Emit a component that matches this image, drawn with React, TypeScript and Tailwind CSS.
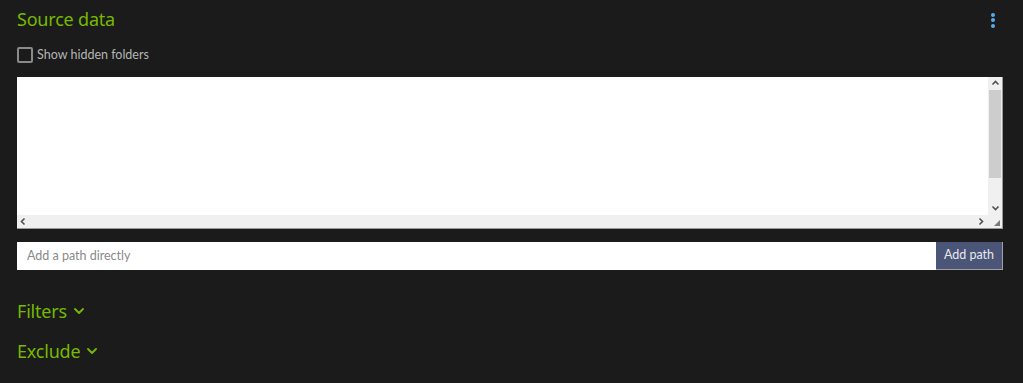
import React from "react";

const Chevron = ({ className = "" }: { className?: string }) => (
  <svg viewBox="0 0 10 6" className={className} fill="none" stroke="currentColor" strokeWidth="1.8" strokeLinecap="round" strokeLinejoin="round">
    <path d="M1 1 L5 5 L9 1" />
  </svg>
);

const Arrow = ({ dir }: { dir: "up" | "down" | "left" | "right" }) => {
  const d = {
    up: "M1.5 5.5 L4.5 2.5 L7.5 5.5",
    down: "M1.5 2.5 L4.5 5.5 L7.5 2.5",
    left: "M5.5 1.5 L2.5 4.5 L5.5 7.5",
    right: "M2.5 1.5 L5.5 4.5 L2.5 7.5",
  }[dir];
  return (
    <svg viewBox="0 0 9 9" className="w-[9px] h-[9px]" fill="none" stroke="#505050" strokeWidth="1.6">
      <path d={d} />
    </svg>
  );
};

export default function App() {
  return (
    <div
      className="w-[1023px] h-[383px] bg-[#1b1b1b] px-[17px] pt-[7px] overflow-hidden"
      style={{ fontFamily: '"Noto Sans", "Open Sans", sans-serif' }}
    >
      <div className="flex items-center justify-between h-[24px]">
        <h1 className="text-[18px] text-[#76b900] leading-none tracking-[-0.2px]">Source data</h1>
        <div className="flex flex-col gap-[1.5px] mr-[11px] pt-[2px]">
          <span className="w-[4px] h-[4px] rounded-full bg-[#5aaae8]" />
          <span className="w-[4px] h-[4px] rounded-full bg-[#5aaae8]" />
          <span className="w-[4px] h-[4px] rounded-full bg-[#5aaae8]" />
        </div>
      </div>

      <label className="flex items-center gap-[4px] mt-[16px] h-[16px]">
        <span className="w-[16px] h-[16px] border-2 border-[#8a8a8a] rounded-[2px] bg-[#1b1b1b]" />
        <span className="text-[12.5px] text-[#b4b4b4] leading-none" style={{ fontFamily: 'Lato, "Noto Sans", sans-serif' }}>Show hidden folders</span>
      </label>

      <div className="mt-[14px] h-[152px] w-[986px] bg-white border-r border-b border-[#9a9a9a] flex flex-col">
        <div className="flex flex-1 min-h-0">
          <div className="flex-1" />
          <div className="w-[14px] bg-[#f0f0f0] flex flex-col items-center">
            <div className="h-[13px] flex items-center justify-center"><Arrow dir="up" /></div>
            <div className="w-[12px] h-[88px] bg-[#cdcdcd]" />
            <div className="flex-1" />
            <div className="h-[13px] flex items-center justify-center"><Arrow dir="down" /></div>
          </div>
        </div>
        <div className="h-[13px] bg-[#f0f0f0] flex items-center">
          <div className="w-[13px] flex justify-center"><Arrow dir="left" /></div>
          <div className="flex-1" />
          <div className="w-[13px] flex justify-center"><Arrow dir="right" /></div>
          <div className="w-[14px] h-[13px] flex items-end justify-end pr-[2px] pb-[2px]">
            <svg viewBox="0 0 6 6" className="w-[6px] h-[6px]"><path d="M6 0 L6 6 L0 6 Z" fill="#7a7a7a" /></svg>
          </div>
        </div>
      </div>

      <div className="mt-[13px] flex h-[28px] w-[986px]" style={{ fontFamily: 'Lato, "Noto Sans", sans-serif' }}>
        <input
          className="flex-1 bg-white px-[10px] text-[12.5px] text-[#333] placeholder:text-[#8a8a8a] outline-none"
          placeholder="Add a path directly"
        />
        <button className="w-[67px] bg-[#4b5578] text-[#e8e8ee] text-[12.5px] border-b border-r border-[#a0a0a8]">Add path</button>
      </div>

      <div className="mt-[29px] flex items-center gap-[7px] text-[#76b900] h-[24px]">
        <span className="text-[18px] leading-none tracking-[-0.2px]">Filters</span>
        <Chevron className="w-[10px] h-[6px]" />
      </div>
      <div className="mt-[16px] flex items-center gap-[7px] text-[#76b900] h-[24px]">
        <span className="text-[18px] leading-none tracking-[-0.2px]">Exclude</span>
        <Chevron className="w-[10px] h-[6px]" />
      </div>
    </div>
  );
}
